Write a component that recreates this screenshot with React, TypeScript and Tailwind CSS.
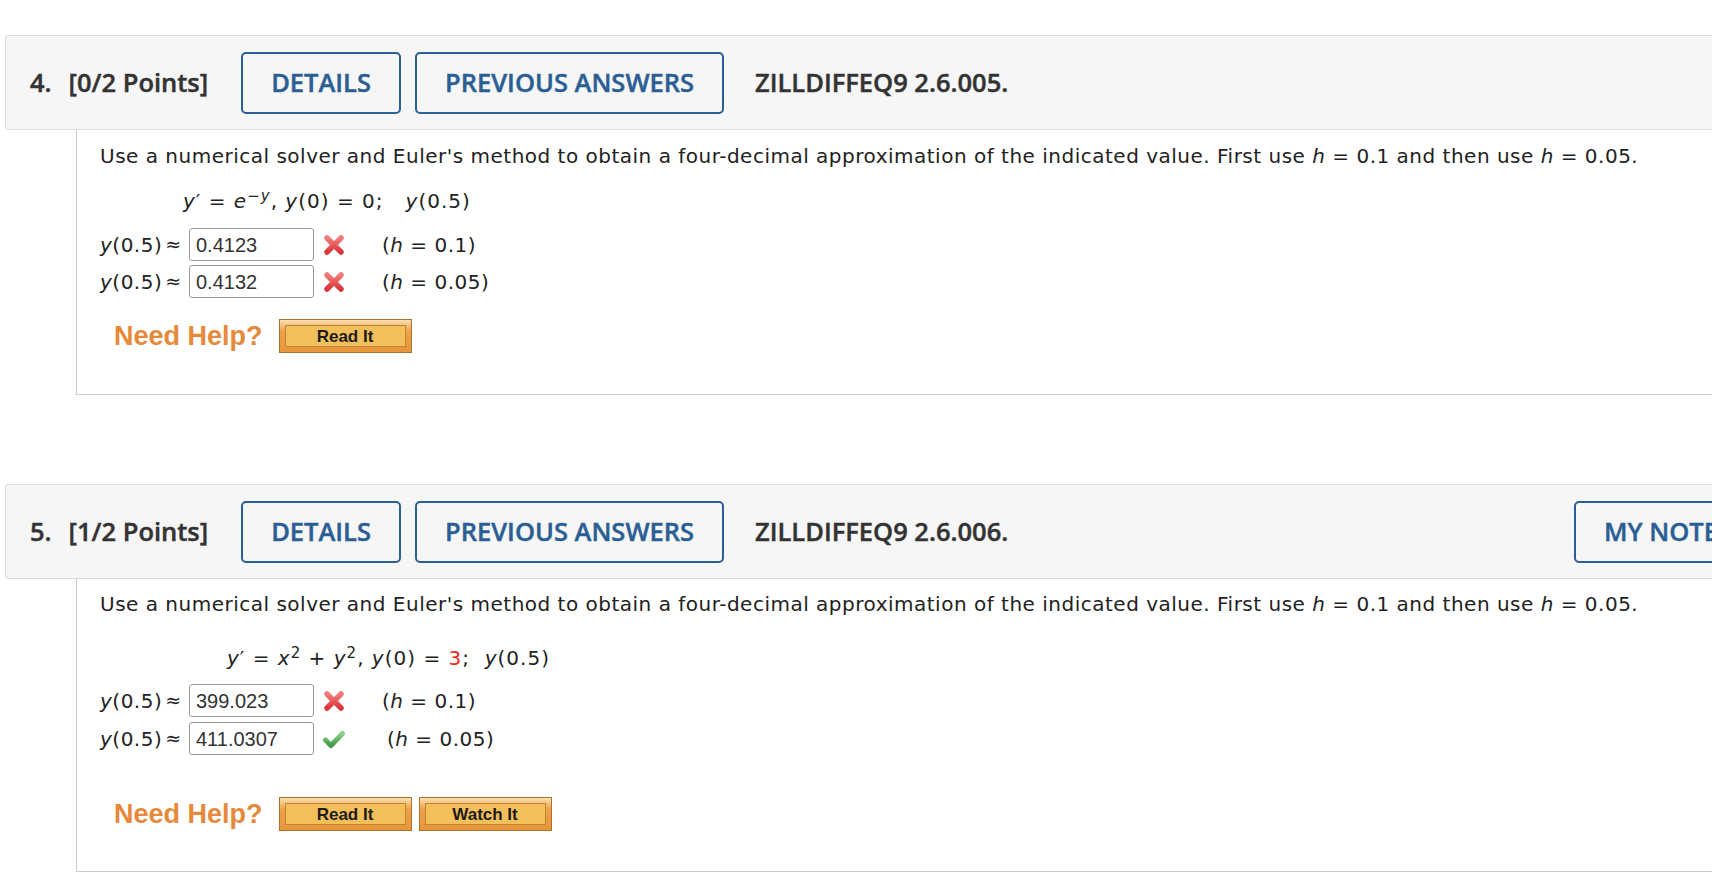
import React from "react";

const body = "font-['DejaVu_Sans',Verdana,sans-serif] text-[20px] tracking-[0.5px] text-[#222222]";
const head = "font-['Open_Sans',sans-serif] font-semibold [-webkit-text-stroke:0.45px_currentColor]";

function XIcon() {
  return (
    <svg width="22" height="22" viewBox="0 0 22 22">
      <defs>
        <linearGradient id="xg" x1="0" y1="0" x2="0" y2="1">
          <stop offset="0" stopColor="#f27b7b" />
          <stop offset="1" stopColor="#d9363a" />
        </linearGradient>
      </defs>
      <path d="M4 4 L18 18 M18 4 L4 18" stroke="url(#xg)" strokeWidth="5.5" strokeLinecap="round" />
    </svg>
  );
}

function CheckIcon() {
  return (
    <svg width="24" height="22" viewBox="0 0 24 22">
      <defs>
        <linearGradient id="cg" x1="0" y1="0" x2="0" y2="1">
          <stop offset="0" stopColor="#8fd18a" />
          <stop offset="1" stopColor="#3f9a45" />
        </linearGradient>
      </defs>
      <path d="M3.5 12 L9 17.5 L20.5 5.5" stroke="url(#cg)" strokeWidth="5" strokeLinecap="round" strokeLinejoin="round" fill="none" />
    </svg>
  );
}

function HeadBtn({ children }: { children: React.ReactNode }) {
  return (
    <div className="h-[62px] px-[28px] flex items-center border-2 border-[#2b5f93] rounded-[5px] text-[#2b5f93] text-[25.5px] tracking-normal whitespace-nowrap shrink-0">
      {children}
    </div>
  );
}

function Header({ num, pts, code, notes }: { num: string; pts: string; code: string; notes?: boolean }) {
  return (
    <div className={`ml-[5px] w-[1790px] h-[95px] border border-[#dddddd] rounded-[3px] bg-[#f6f6f6] flex items-center pl-[24px] ${head} text-[#333333] text-[25.5px] tracking-normal`}>
      <span className="whitespace-nowrap">{num}</span>
      <span className="ml-[17px] whitespace-nowrap">{pts}</span>
      <div className="ml-[33px] flex gap-[14px]">
        <HeadBtn>DETAILS</HeadBtn>
        <HeadBtn>PREVIOUS ANSWERS</HeadBtn>
      </div>
      <span className="ml-[31px] whitespace-nowrap">{code}</span>
      {notes && (
        <div className="ml-auto mr-[32px]">
          <HeadBtn>MY NOTES</HeadBtn>
        </div>
      )}
    </div>
  );
}

function Y() {
  return <i>y</i>;
}

function Row({ value, ok, h, textShift }: { value: string; ok?: boolean; h: string; textShift?: boolean }) {
  return (
    <div className="flex items-center h-[33px]">
      <div className="w-[89px] whitespace-nowrap flex items-center">
        <span>
          <Y />(0.5)
        </span>
        <span className="ml-[3px] text-[19px] tracking-normal">≈</span>
      </div>
      <div className="w-[125px] h-[33px] border border-[#9a9a9a] rounded-[3px] bg-white flex items-center pl-[6px] font-['Liberation_Sans',Arial,sans-serif] text-[20px] tracking-normal text-[#333333]">
        {value}
      </div>
      <div className="ml-[8px] w-[24px] flex items-center justify-center">{ok ? <CheckIcon /> : <XIcon />}</div>
      <div className={`${textShift ? "ml-[41px]" : "ml-[36px]"} whitespace-nowrap`}>
        (<i>h</i> = {h})
      </div>
    </div>
  );
}

function HelpBtn({ label, w }: { label: string; w: string }) {
  return (
    <div className={`${w} h-[34px] border border-[#a8742f] bg-[linear-gradient(#fbe0b0,#eea146_35%,#e8953a)] p-[5px] shrink-0`}>
      <div className="h-full border border-[#bd8536] bg-[#f2bf5b] flex items-center justify-center font-['Liberation_Sans',Arial,sans-serif] font-bold text-[17px] tracking-normal text-[#1c1c1c] leading-none">
        {label}
      </div>
    </div>
  );
}

function NeedHelp({ watch }: { watch?: boolean }) {
  return (
    <div className="flex items-center ml-[14px] h-[34px]">
      <span className="font-['Liberation_Sans',Arial,sans-serif] font-bold text-[27px] tracking-normal text-[#e6893a] whitespace-nowrap leading-none">Need Help?</span>
      <div className="ml-[16px] flex gap-[7px]">
        <HelpBtn label="Read It" w="w-[133px]" />
        {watch && <HelpBtn label="Watch It" w="w-[133px]" />}
      </div>
    </div>
  );
}

const para = (
  <p className="leading-[26px] whitespace-nowrap">
    Use a numerical solver and Euler's method to obtain a four-decimal approximation of the indicated value. First use <i>h</i> = 0.1 and then use <i>h</i> = 0.05.
  </p>
);

export default function App() {
  return (
    <div className={`w-[1712px] h-[890px] overflow-hidden bg-white ${body}`}>
      <div className="pt-[35px]">
        <Header num="4." pts="[0/2 Points]" code="ZILLDIFFEQ9 2.6.005." />
        <div className="ml-[76px] w-[1700px] border-l border-b border-[#cccccc] pl-[23px] pt-[13px] pb-[41px]">
          {para}
          <div className="mt-[19px] ml-[83px] h-[26px] leading-[26px] whitespace-nowrap tracking-[1px]">
            <Y />′ = <i>e</i>
            <sup className="text-[15px]">−<i>y</i></sup>, <Y />(0) = 0;&nbsp;&nbsp; <Y />(0.5)
          </div>
          <div className="mt-[14px] flex flex-col gap-[4px]">
            <Row value="0.4123" h="0.1" />
            <Row value="0.4132" h="0.05" />
          </div>
          <div className="mt-[21px]">
            <NeedHelp />
          </div>
        </div>

        <div className="h-[89px]" />

        <Header num="5." pts="[1/2 Points]" code="ZILLDIFFEQ9 2.6.006." notes />
        <div className="ml-[76px] w-[1700px] border-l border-b border-[#cccccc] pl-[23px] pt-[12px] pb-[40px]">
          {para}
          <div className="mt-[28px] ml-[127px] h-[26px] leading-[26px] whitespace-nowrap tracking-[1px]">
            <Y />′ = <i>x</i>
            <sup className="text-[15px]">2</sup> + <Y />
            <sup className="text-[15px]">2</sup>, <Y />(0) = <span className="text-[#e8281c]">3</span>;&nbsp; <Y />(0.5)
          </div>
          <div className="mt-[13px] flex flex-col gap-[5px]">
            <Row value="399.023" h="0.1" />
            <Row value="411.0307" h="0.05" ok textShift />
          </div>
          <div className="mt-[42px]">
            <NeedHelp watch />
          </div>
        </div>
      </div>
    </div>
  );
}
